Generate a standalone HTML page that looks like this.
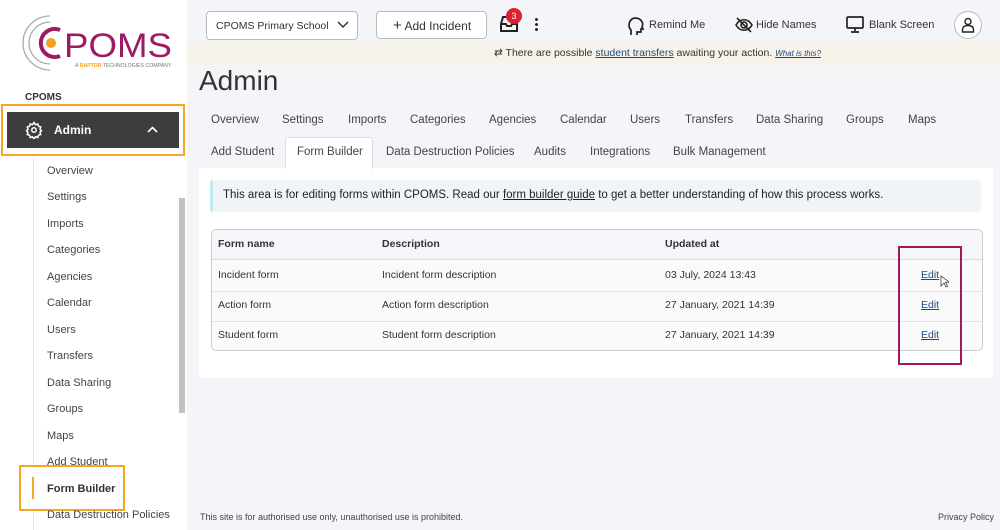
<!DOCTYPE html>
<html><head><meta charset="utf-8"><style>
*{box-sizing:border-box;margin:0;padding:0}
body{width:1000px;height:530px;overflow:hidden;background:#f4f5f9;font-family:"Liberation Sans",sans-serif;position:relative;color:#333}
.abs{position:absolute}
#side{left:0;top:0;width:187px;height:530px;background:#fff}
.nav{position:absolute;left:47px;font-size:11px;color:#444}
.tab{position:absolute;font-size:11.5px;color:#444}
</style></head><body>
<div id="side" class="abs">
 <svg class="abs" style="left:20px;top:12px" width="160" height="62" viewBox="0 0 160 62">
  <g fill="none" stroke="#aaa" stroke-width="1.3"><path d="M30 4 A27 27 0 1 0 30 58"/><path d="M30 10 A21 21 0 1 0 30 52"/></g>
  <path d="M40 18 A14 14 0 1 0 40 44" fill="none" stroke="#9d1a64" stroke-width="4"/>
  <circle cx="31" cy="31" r="5" fill="#f7a11a"/>
  <text x="44" y="45" font-family="Liberation Sans" font-size="34" fill="#9d1a64" textLength="108" lengthAdjust="spacingAndGlyphs">POMS</text>
  <text x="55" y="55" font-family="Liberation Sans" font-size="5.2" fill="#777">A <tspan fill="#f7a11a" font-weight="bold">RAPTOR</tspan> TECHNOLOGIES COMPANY</text>
 </svg>
 <div class="abs" style="left:25px;top:92px;font-size:10px;font-weight:bold;color:#333">CPOMS</div>
 <div class="abs" style="left:1px;top:104px;width:184px;height:52px;border:2px solid #f5a623"></div>
 <div class="abs" style="left:7px;top:112px;width:172px;height:36px;background:#3d3d3d"></div>
 <svg class="abs" style="left:25px;top:121px" width="18" height="18" viewBox="0 0 24 24" fill="none" stroke="#fff" stroke-width="2"><circle cx="12" cy="12" r="3"/><path d="M12 2l2 3 3-1 1 3 3 1-1 3 2 2-2 2 1 3-3 1-1 3-3-1-2 3-2-3-3 1-1-3-3-1 1-3-2-2 2-2-1-3 3-1 1-3 3 1z"/></svg>
 <div class="abs" style="left:54px;top:123px;font-size:12px;font-weight:bold;color:#fff">Admin</div>
 <svg class="abs" style="left:147px;top:126px" width="11" height="8"><path d="M1 6l4.5-4.5L10 6" stroke="#fff" stroke-width="1.6" fill="none"/></svg>
 <div class="abs" style="left:33px;top:158px;width:1px;height:372px;background:#e8e8e8"></div>
 <div class="nav" style="top:165px">Overview</div>
 <div class="nav" style="top:191px">Settings</div>
 <div class="nav" style="top:218px">Imports</div>
 <div class="nav" style="top:244px">Categories</div>
 <div class="nav" style="top:271px">Agencies</div>
 <div class="nav" style="top:297px">Calendar</div>
 <div class="nav" style="top:324px">Users</div>
 <div class="nav" style="top:350px">Transfers</div>
 <div class="nav" style="top:377px">Data Sharing</div>
 <div class="nav" style="top:403px">Groups</div>
 <div class="nav" style="top:430px">Maps</div>
 <div class="nav" style="top:456px">Add Student</div>
 <div class="abs" style="left:19px;top:465px;width:106px;height:46px;border:2px solid #f5a623;background:#fff"></div>
 <div class="abs" style="left:32px;top:477px;width:2px;height:22px;background:#f5a623"></div>
 <div class="nav" style="top:483px;font-weight:bold;color:#333">Form Builder</div>
 <div class="nav" style="top:509px">Data Destruction Policies</div>
 <div class="abs" style="left:179px;top:198px;width:6px;height:215px;background:#c1c1c1"></div>
</div>
<div class="abs" style="left:206px;top:11px;width:152px;height:29px;border:1px solid #bbb;border-radius:4px;background:#fff;font-size:10.5px;padding:8px 9px">CPOMS Primary School</div>
<svg class="abs" style="left:337px;top:21px" width="12" height="8"><path d="M1 1l5 5 5-5" stroke="#333" stroke-width="1.5" fill="none"/></svg>
<div class="abs" style="left:376px;top:11px;width:111px;height:28px;border:1px solid #bbb;border-radius:4px;background:#fff;font-size:12px;padding:7px 0 0 16px"><b style="font-size:15px;font-weight:normal;line-height:10px">+</b> Add Incident</div>
<svg class="abs" style="left:499px;top:15px" width="20" height="18" viewBox="0 0 20 18" fill="none" stroke="#222" stroke-width="2"><path d="M2 9l2-7h12l2 7v7H2z M2 9h5l1 2h4l1-2h5"/></svg>
<div class="abs" style="left:506px;top:8px;width:16px;height:16px;border-radius:50%;background:#d7232f;color:#fff;font-size:9px;text-align:center;line-height:16px">3</div>
<div class="abs" style="left:535px;top:17px;width:3px;height:14px;background:radial-gradient(circle,#222 1.3px,transparent 1.6px) 0 0/3px 5px"></div>
<svg class="abs" style="left:627px;top:16px" width="18" height="20" viewBox="0 0 18 20" fill="none" stroke="#222" stroke-width="1.7"><path d="M4 19v-5C1 11 1 3 8 2c6 0 9 5 7 9l1 2h-2v3h-4v3"/></svg>
<div class="abs" style="left:649px;top:19px;font-size:11px;color:#333">Remind Me</div>
<svg class="abs" style="left:735px;top:17px" width="18" height="16" viewBox="0 0 18 16" fill="none" stroke="#222" stroke-width="1.6"><path d="M1 8c4-7 12-7 16 0-4 7-12 7-16 0z"/><circle cx="9" cy="8" r="3"/><path d="M2 1l14 14"/></svg>
<div class="abs" style="left:756px;top:19px;font-size:11px;color:#333">Hide Names</div>
<svg class="abs" style="left:846px;top:16px" width="18" height="17" viewBox="0 0 18 17" fill="none" stroke="#222" stroke-width="1.7"><rect x="1" y="1" width="16" height="11" rx="1"/><path d="M9 12v3M5 16h8"/></svg>
<div class="abs" style="left:869px;top:19px;font-size:11px;color:#333">Blank Screen</div>
<div class="abs" style="left:954px;top:11px;width:28px;height:28px;border:1px solid #bbb;border-radius:50%;background:#fff"></div>
<svg class="abs" style="left:961px;top:17px" width="14" height="16" viewBox="0 0 14 16" fill="none" stroke="#222" stroke-width="1.4"><circle cx="7" cy="4.5" r="3"/><path d="M1.5 15v-2c0-3 2-4.5 5.5-4.5s5.5 1.5 5.5 4.5v2z"/></svg>
<div class="abs" style="left:187px;top:42px;width:813px;height:23px;background:#f7f3ea"></div>
<div class="abs" style="left:494px;top:47px;font-size:10.5px;color:#333">⇄ There are possible <u style="color:#1f4a7a">student transfers</u> awaiting your action. <i style="font-size:8px;color:#1f4a7a;text-decoration:underline">What is this?</i></div>
<div class="abs" style="left:199px;top:65px;font-size:28px;color:#333">Admin</div>
<div class="tab" style="left:211px;top:114px">Overview</div>
<div class="tab" style="left:282px;top:114px">Settings</div>
<div class="tab" style="left:348px;top:114px">Imports</div>
<div class="tab" style="left:410px;top:114px">Categories</div>
<div class="tab" style="left:489px;top:114px">Agencies</div>
<div class="tab" style="left:560px;top:114px">Calendar</div>
<div class="tab" style="left:630px;top:114px">Users</div>
<div class="tab" style="left:685px;top:114px">Transfers</div>
<div class="tab" style="left:756px;top:114px">Data Sharing</div>
<div class="tab" style="left:846px;top:114px">Groups</div>
<div class="tab" style="left:908px;top:114px">Maps</div>
<div class="abs" style="left:199px;top:168px;width:794px;height:210px;background:#fff"></div>
<div class="abs" style="left:285px;top:137px;width:88px;height:32px;background:#fff;border:1px solid #ddd;border-bottom:none;border-radius:3px 3px 0 0"></div>
<div class="tab" style="left:211px;top:146px">Add Student</div>
<div class="tab" style="left:297px;top:146px">Form Builder</div>
<div class="tab" style="left:386px;top:146px">Data Destruction Policies</div>
<div class="tab" style="left:534px;top:146px">Audits</div>
<div class="tab" style="left:590px;top:146px">Integrations</div>
<div class="tab" style="left:673px;top:146px">Bulk Management</div>
<div class="abs" style="left:210px;top:180px;width:771px;height:32px;background:#f1f4f7;border-left:3px solid #bfe8ef;border-radius:3px;font-size:11.5px;padding:9px 0 0 10px;color:#222">This area is for editing forms within CPOMS. Read our <u>form builder guide</u> to get a better understanding of how this process works.</div>
<div class="abs" style="left:211px;top:229px;width:772px;height:122px;border:1px solid #ccc;border-radius:5px;overflow:hidden;background:#fafafa">
 <div class="abs" style="left:0;top:0;width:772px;height:30px;background:#f5f6f9;border-bottom:1px solid #ddd"></div>
 <div class="abs" style="left:0;top:61px;width:772px;height:1px;background:#e4e4e4"></div>
 <div class="abs" style="left:0;top:91px;width:772px;height:1px;background:#e4e4e4"></div>
 <div class="abs" style="left:6px;top:8px;font-size:10.5px;font-weight:bold">Form name</div>
 <div class="abs" style="left:170px;top:8px;font-size:10.5px;font-weight:bold">Description</div>
 <div class="abs" style="left:453px;top:8px;font-size:10.5px;font-weight:bold">Updated at</div>
 <div class="abs" style="left:6px;top:39px;font-size:10.5px">Incident form</div>
 <div class="abs" style="left:170px;top:39px;font-size:10.5px">Incident form description</div>
 <div class="abs" style="left:453px;top:39px;font-size:10.5px">03 July, 2024 13:43</div>
 <div class="abs" style="left:6px;top:69px;font-size:10.5px">Action form</div>
 <div class="abs" style="left:170px;top:69px;font-size:10.5px">Action form description</div>
 <div class="abs" style="left:453px;top:69px;font-size:10.5px">27 January, 2021 14:39</div>
 <div class="abs" style="left:6px;top:99px;font-size:10.5px">Student form</div>
 <div class="abs" style="left:170px;top:99px;font-size:10.5px">Student form description</div>
 <div class="abs" style="left:453px;top:99px;font-size:10.5px">27 January, 2021 14:39</div>
 <div class="abs" style="left:709px;top:39px;font-size:10.5px;color:#1f4a7a;text-decoration:underline">Edit</div>
 <div class="abs" style="left:709px;top:69px;font-size:10.5px;color:#1f4a7a;text-decoration:underline">Edit</div>
 <div class="abs" style="left:709px;top:99px;font-size:10.5px;color:#1f4a7a;text-decoration:underline">Edit</div>
</div>
<div class="abs" style="left:898px;top:246px;width:64px;height:119px;border:2px solid #a3195b"></div>
<svg class="abs" style="left:940px;top:275px" width="9" height="13"><path d="M1 1v10l3-3 2 4 1.5-.7-2-4h4z" fill="#fff" stroke="#444" stroke-width=".8"/></svg>
<div class="abs" style="left:200px;top:512px;font-size:9px;color:#444">This site is for authorised use only, unauthorised use is prohibited.</div>
<div class="abs" style="left:938px;top:512px;font-size:9px;color:#444">Privacy Policy</div>
</body></html>
